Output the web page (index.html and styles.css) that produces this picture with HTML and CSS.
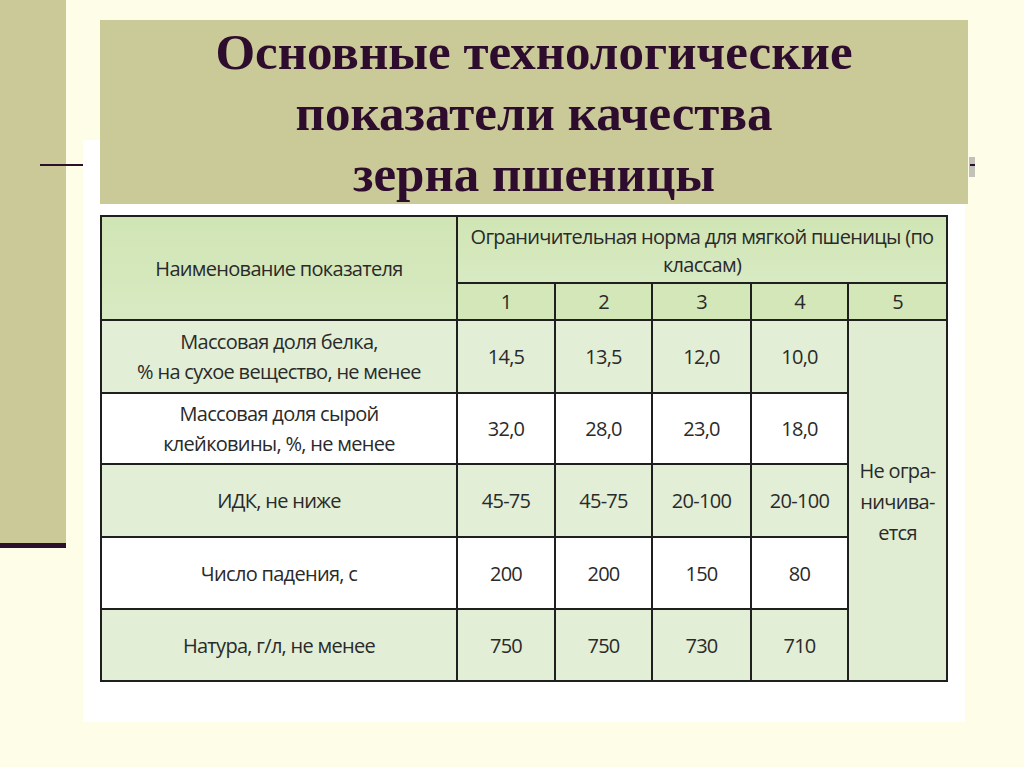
FILE: index.html
```html
<!DOCTYPE html>
<html lang="ru">
<head>
<meta charset="utf-8">
<title>Основные технологические показатели качества зерна пшеницы</title>
<link rel="stylesheet" href="styles.css">
</head>
<body>
<div class="slide">
  <div class="side-strip"></div>
  <div class="rule-left"></div>
  <div class="rule-right"></div>

  <div class="picture">
    <table class="grain">
      <colgroup>
        <col class="c-name"><col class="c1"><col class="c2"><col class="c3"><col class="c4"><col class="c5">
      </colgroup>
      <tr class="h1">
        <th rowspan="2">Наименование показателя</th>
        <th colspan="5" class="norm">Ограничительная норма для мягкой пшеницы (по классам)</th>
      </tr>
      <tr class="h2">
        <th>1</th><th>2</th><th>3</th><th>4</th><th>5</th>
      </tr>
      <tr class="r1 green">
        <td>Массовая доля белка,<br>% на сухое вещество, не менее</td>
        <td>14,5</td><td>13,5</td><td>12,0</td><td>10,0</td>
        <td rowspan="5" class="merged">Не огра-<br>ничива-<br>ется</td>
      </tr>
      <tr class="r2 white">
        <td>Массовая доля сырой<br>клейковины, %, не менее</td>
        <td>32,0</td><td>28,0</td><td>23,0</td><td>18,0</td>
      </tr>
      <tr class="r3 green">
        <td>ИДК, не ниже</td>
        <td>45-75</td><td>45-75</td><td>20-100</td><td>20-100</td>
      </tr>
      <tr class="r4 white">
        <td>Число падения, с</td>
        <td>200</td><td>200</td><td>150</td><td>80</td>
      </tr>
      <tr class="r5 green">
        <td>Натура, г/л, не менее</td>
        <td>750</td><td>750</td><td>730</td><td>710</td>
      </tr>
    </table>
  </div>

  <div class="title-box">
    <h1>Основные технологические<br>показатели качества<br>зерна пшеницы</h1>
  </div>
</div>
</body>
</html>
```

FILE: styles.css
```css
html, body {
  margin: 0;
  padding: 0;
}
body {
  background: #fefee8;
}
.slide {
  position: relative;
  width: 1024px;
  height: 767px;
  overflow: hidden;
  background: #fefee8;
}
.side-strip {
  position: absolute;
  left: 0;
  top: 0;
  width: 66px;
  height: 543px;
  background: #cbc998;
  border-bottom: 5px solid #2b0f2b;
}
.rule-left {
  position: absolute;
  left: 40px;
  top: 164px;
  width: 43px;
  height: 2px;
  background: #2b0f2b;
}
.rule-right {
  position: absolute;
  left: 969px;
  top: 157px;
  width: 6px;
  height: 20px;
  background: #c2c2b8;
}
.rule-right::after {
  content: "";
  position: absolute;
  left: 1px;
  top: 7px;
  width: 5px;
  height: 2px;
  background: #2b0f2b;
}
.picture {
  margin-left: 83px;
  margin-top: 140px;
  width: 882px;
  height: 582px;
  box-sizing: border-box;
  padding: 75px 0 0 17px;
  background: #ffffff;
}
.title-box {
  position: absolute;
  left: 100px;
  top: 20px;
  width: 868px;
  height: 184px;
  background: #cac998;
  display: flex;
  justify-content: center;
}
.title-box h1 {
  margin: 0;
  padding-top: 2px;
  font-family: "Liberation Serif", "Times New Roman", serif;
  font-weight: bold;
  font-size: 51px;
  line-height: 61px;
  color: #2e0c2e;
  text-align: center;
}
.grain {
  border-collapse: collapse;
  table-layout: fixed;
  width: 846px;
  font-family: "Open Sans", "Noto Sans", sans-serif;
  font-size: 20px;
  color: #2a2a2a;
  letter-spacing: -0.7px;
}
.grain th, .grain td {
  border: 2px solid #1f1f1f;
  padding: 0;
  text-align: center;
  vertical-align: middle;
  font-weight: normal;
}
.c-name { width: 356px; }
.c1 { width: 98px; }
.c2 { width: 97px; }
.c3 { width: 99px; }
.c4 { width: 97px; }
.c5 { width: 99px; }

.h1 th {
  height: 59px;
  background: linear-gradient(180deg, #d0e5b4 0%, #d8eac2 100%);
}
.h1 th.norm {
  vertical-align: top;
  padding-top: 6px;
  line-height: 28px;
}
.h2 th {
  height: 35px;
  background: #d3e7b8;
}
.green td {
  background: #e2eed5;
}
.white td {
  background: #ffffff;
}
.r1 td { height: 71px; line-height: 30px; }
.r2 td { height: 69px; line-height: 30px; }
.r3 td { height: 71px; }
.r4 td { height: 70px; }
.r5 td { height: 70px; }
.grain td.merged {
  background: #e0edd3;
  vertical-align: top;
  padding-top: 134px;
  line-height: 31px;
}
```
